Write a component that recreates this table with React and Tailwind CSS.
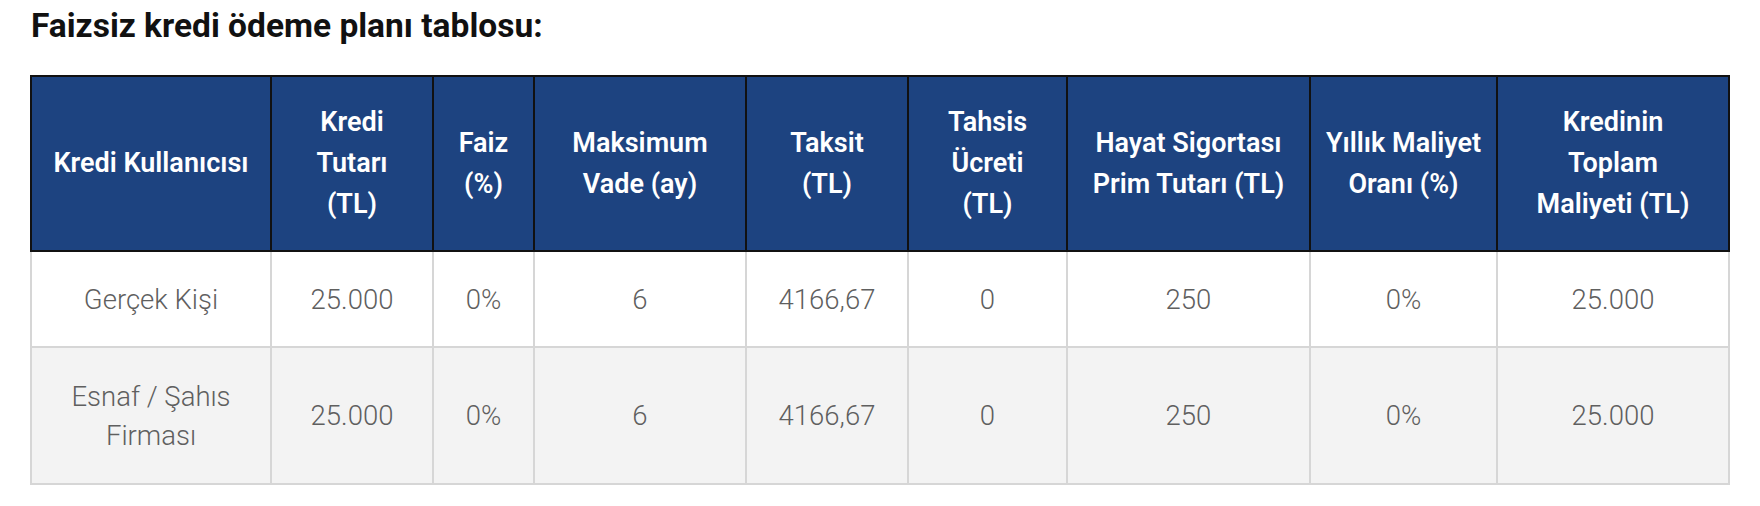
import React from "react";

const headers = [
  ["Kredi Kullanıcısı"],
  ["Kredi", "Tutarı", "(TL)"],
  ["Faiz", "(%)"],
  ["Maksimum", "Vade (ay)"],
  ["Taksit", "(TL)"],
  ["Tahsis", "Ücreti", "(TL)"],
  ["Hayat Sigortası", "Prim Tutarı (TL)"],
  ["Yıllık Maliyet", "Oranı (%)"],
  ["Kredinin", "Toplam", "Maliyeti (TL)"],
];

const widths = [240, 162, 101, 212, 162, 159, 243, 187, 232];

const rows = [
  { bg: "bg-white", cells: [["Gerçek Kişi"], ["25.000"], ["0%"], ["6"], ["4166,67"], ["0"], ["250"], ["0%"], ["25.000"]] },
  { bg: "bg-[#f3f3f3]", cells: [["Esnaf / Şahıs", "Firması"], ["25.000"], ["0%"], ["6"], ["4166,67"], ["0"], ["250"], ["0%"], ["25.000"]] },
];

export default function App() {
  return (
    <div className="w-[1760px] h-[506px] bg-white font-['Roboto',sans-serif]">
      <div className="pl-[31px] pt-[8px]">
        <h2 className="text-[33.5px] leading-[36px] font-bold text-[#111]">Faizsiz kredi ödeme planı tablosu:</h2>
      </div>
      <div className="pl-[30px] pt-[31px]">
        <table className="border-collapse table-fixed w-[1698px]">
          <colgroup>
            {widths.map((w, i) => (
              <col key={i} style={{ width: w }} />
            ))}
          </colgroup>
          <thead>
            <tr className="h-[175px]">
              {headers.map((h, i) => (
                <th
                  key={i}
                  className="bg-[#1d4380] border-2 border-[#111] text-white font-semibold text-[27px] leading-[41px] text-center align-middle px-1"
                >
                  {h.map((l, j) => (
                    <div key={j} className="whitespace-nowrap">{l}</div>
                  ))}
                </th>
              ))}
            </tr>
          </thead>
          <tbody>
            {rows.map((r, ri) => (
              <tr key={ri} className={ri === 0 ? "h-[96px]" : "h-[137px]"}>
                {r.cells.map((c, ci) => (
                  <td
                    key={ci}
                    className={`${r.bg} border-2 border-[#d6d6d6] text-[#5f5f5f] font-light text-[27.5px] leading-[39px] text-center align-middle px-1`}
                  >
                    {c.map((l, j) => (
                      <div key={j} className="whitespace-nowrap">{l}</div>
                    ))}
                  </td>
                ))}
              </tr>
            ))}
          </tbody>
        </table>
      </div>
    </div>
  );
}
